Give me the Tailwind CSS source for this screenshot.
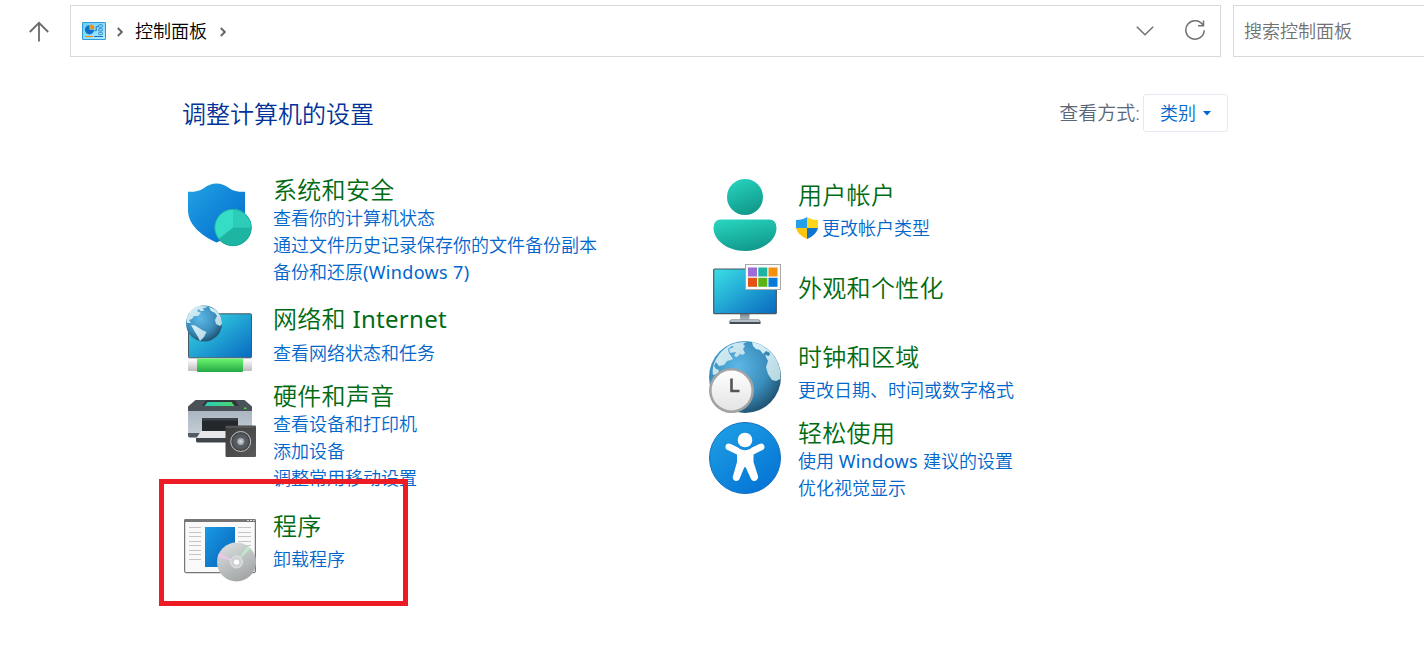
<!DOCTYPE html>
<html lang="zh-CN">
<head>
  <meta charset="UTF-8" />
  <meta name="viewport" content="width=device-width, initial-scale=1.0"/>
  <title>控制面板</title>
  <script src="https://cdn.jsdelivr.net/npm/@tailwindcss/browser@4"></script>
</head>
<body class="bg-white h-[645px] overflow-hidden font-['Noto_Sans','Noto_Sans_CJK_SC',sans-serif] font-[350] text-lg text-[#0066cc]">

  <!-- Address bar -->
  <header class="flex items-center h-[52px] mt-[5px] w-[1440px]">
    <button class="w-[70px] pl-[28px] pt-px">
      <svg class="block" width="22" height="22" viewBox="0 0 22 22" fill="none" stroke="#6b6b6b" stroke-width="1.8"><path d="M11 20.5V2M1.8 11L11 1.8L20.2 11"/></svg>
    </button>
    <div class="flex items-center w-[1151px] h-full border border-[#d9d9d9] pl-[11px] pr-[14px]">
      <svg class="shrink-0 -mt-px" width="24" height="18" viewBox="0 0 24 18">
        <defs><linearGradient id="cp" x1="0" y1="0" x2="1" y2="1"><stop offset="0" stop-color="#67cdf5"/><stop offset="1" stop-color="#b4eaff"/></linearGradient></defs>
        <rect x=".5" y=".5" width="23" height="17" rx=".5" fill="url(#cp)" stroke="#2f9cd9"/>
        <path d="M7.500 3.200A4.600 4.600 0 1 0 12.100 7.800H7.500Z" fill="#0e73c7"/>
        <path d="M8.300 2.600A4.400 4.400 0 0 1 12.500 7H8.300Z" fill="#f58a0b"/>
        <path d="M12.500 8.700h1.800V4.500h2" fill="none" stroke="#1377c4" stroke-width=".9"/>
        <rect x="16.500" y="2.700" width="4" height="2.600" rx="1" fill="none" stroke="#1377c4" stroke-width=".8"/>
        <rect x="16.500" y="6.700" width="4" height="2.300" rx="1" fill="none" stroke="#1377c4" stroke-width=".8"/>
        <rect x="16.500" y="10.400" width="4" height="2.300" rx="1" fill="none" stroke="#1377c4" stroke-width=".8"/>
        <path d="M3 14.500h8" stroke="#f58a0b"/><path d="M12 14.500h9" stroke="#1377c4"/>
      </svg>
      <svg class="ml-[11px] mt-px shrink-0" width="6" height="10" viewBox="0 0 6 10" fill="none" stroke="#666" stroke-width="1.9"><path d="M.8 1L4.8 5L.8 9"/></svg>
      <span class="ml-[12px] text-black">控制面板</span>
      <svg class="ml-[13px] mt-px shrink-0" width="6" height="10" viewBox="0 0 6 10" fill="none" stroke="#666" stroke-width="1.9"><path d="M.8 1L4.8 5L.8 9"/></svg>
      <svg class="ml-auto -mt-px" width="18" height="10" viewBox="0 0 18 10" fill="none" stroke="#707070" stroke-width="1.5"><path d="M.8 .8L9 8.800L17.200 .8"/></svg>
      <svg class="ml-[30px] mb-[3px]" width="22" height="22" viewBox="0 0 22 22" fill="none" stroke="#707070" stroke-width="1.5"><path d="M19.200 6.800A9.200 9.200 0 1 0 20.200 11.200M19.500 1.500V6.800H14"/></svg>
    </div>
    <div class="flex items-center flex-1 h-full ml-3 border border-[#d9d9d9] pl-[10px] text-[#717171]">搜索控制面板</div>
  </header>

  <!-- Title and view mode -->
  <div class="flex items-center h-[38px] mt-[37px] ml-[182px] w-[1046px]">
    <h1 class="pt-px text-2xl text-[#003399]">调整计算机的设置</h1>
    <span class="ml-auto pt-px text-[19px] text-[#5a6778]">查看方式:</span>
    <button class="flex items-center h-full w-[85px] ml-[3px] pl-4 border border-[#e4eaf1] rounded-[3px]">类别
      <svg class="ml-[7px]" width="8" height="5" viewBox="0 0 8 5"><path d="M0 0H8L4 4.500Z" fill="#0066cc"/></svg>
    </button>
  </div>

  <!-- Categories -->
  <main class="flex mt-[44px] ml-[184px] leading-[27px]">
    <section class="w-[525px]">

      <div class="flex items-start gap-[17px] h-[109px]">
        <svg class="mt-[3px] shrink-0" width="72" height="72" viewBox="0 0 72 72">
          <defs>
            <linearGradient id="sh" x1="0" y1="0" x2="1" y2="1"><stop offset="0" stop-color="#22a3e4"/><stop offset="1" stop-color="#0069cc"/></linearGradient>
          </defs>
          <path d="M33 4.500L28 4C24 5 21 7 18.500 9.500C14 12.300 9 13 4 12.800V31C4 45 16 56 32 63.500C49 57 61 47 61 33V12.800C56 13 50 12.500 46 9.500C42 6 38 4.500 33 4.500Z" fill="none"/>
          <path d="M32.500 4.500C37 4.500 41 6 45 9C50 12.500 55 13 61 12.800V33C61 47 49 57 32.500 63.500C16 56 4 45 4 31V12.800C10 13 15 12.500 20 9C24 6 28 4.500 32.500 4.500Z" fill="url(#sh)"/>
          <circle cx="49" cy="48.500" r="18.500" fill="#35ddc6"/>
          <path d="M49 48.500V30A18.500 18.500 0 0 1 67.500 48.500Z" fill="#2cccb8"/>
          <path d="M49 48.500H67.500A18.500 18.500 0 0 1 34.500 60Z" fill="#1fb5a3"/>
          <circle cx="49" cy="48.500" r="18.200" fill="none" stroke="#159c90" stroke-opacity=".65"/>
        </svg>
        <div>
          <h2 class="text-2xl leading-7 tracking-[0.3px] text-[#006b12]">系统和安全</h2>
          <p class="mt-px">查看你的计算机状态</p>
          <p>通过文件历史记录保存你的文件备份副本</p>
          <p>备份和还原<span class="font-normal tracking-[0.35px]">(Windows 7)</span></p>
        </div>
      </div>

      <div class="flex items-start gap-[17px] h-[72px] mt-[18px]">
        <svg class="shrink-0" width="72" height="72" viewBox="0 0 72 72">
          <defs>
            <linearGradient id="scr" x1="0" y1="0" x2="1" y2="1"><stop offset="0" stop-color="#3ae0e6"/><stop offset="1" stop-color="#0868c0"/></linearGradient>
            <linearGradient id="grn" x1="0" y1="0" x2="0" y2="1"><stop offset="0" stop-color="#6cf56f"/><stop offset="1" stop-color="#22a945"/></linearGradient>
            <linearGradient id="plug" x1="0" y1="0" x2="0" y2="1"><stop offset="0" stop-color="#fafafa"/><stop offset="1" stop-color="#bcbcbc"/></linearGradient>
            <radialGradient id="gl" cx=".4" cy=".35" r=".7"><stop offset="0" stop-color="#5cb8e8"/><stop offset=".6" stop-color="#3a8dbb"/><stop offset="1" stop-color="#1d4d6b"/></radialGradient>
            <linearGradient id="land" x1="0" y1="0" x2="1" y2="1"><stop offset="0" stop-color="#d9f4fc"/><stop offset="1" stop-color="#b4d5df"/></linearGradient>
          </defs>
          <rect x="4.500" y="10.800" width="63" height="44" rx="1" fill="url(#scr)" stroke="#4a5660"/>
          <rect x="4" y="57" width="64" height="11" rx="1.500" fill="url(#plug)"/>
          <rect x="13" y="55.500" width="46" height="13.500" rx="1" fill="url(#grn)"/>
          <circle cx="20" cy="20.500" r="18" fill="url(#gl)"/>
          <path d="M2.500 17C4 9 9 4.500 15 3L24 3.500L21 5L19 5L20 8L16 8L15 6L13 8L17 10L14 13L10 13L8 16L5 17L7 20L3 20Z" fill="url(#land)"/>
          <path d="M7 22L11 22.500L15 25L18 27L22.500 29L20 34L16 38L14 34L11 29Z" fill="url(#land)"/>
          <path d="M25 4L30 6C35 9 38 14 38 21L36 23L32 21L31 17L33 13L31 10L27 8Z" fill="url(#land)"/>
        </svg>
        <div class="mt-[3px]">
          <h2 class="text-2xl leading-7 -mt-px tracking-[0.3px] text-[#006b12]">网络和 <span class="font-normal">Internet</span></h2>
          <p class="mt-[7px]">查看网络状态和任务</p>
        </div>
      </div>

      <div class="flex items-start gap-[17px] h-[109px] mt-[7px]">
        <svg class="mt-[10px] shrink-0" width="72" height="72" viewBox="0 0 72 72">
          <defs>
            <linearGradient id="pr" x1="0" y1="0" x2="0" y2="1"><stop offset="0" stop-color="#a9b4bf"/><stop offset="1" stop-color="#c9d2da"/></linearGradient>
            <linearGradient id="scan" x1="0" y1="0" x2="1" y2="0"><stop offset="0" stop-color="#24cbb8"/><stop offset="1" stop-color="#50d86b"/></linearGradient>
            <linearGradient id="spk" x1="0" y1="0" x2="1" y2="1"><stop offset="0" stop-color="#3b3b3b"/><stop offset="1" stop-color="#5a5a5a"/></linearGradient>
            <radialGradient id="cone"><stop offset="0" stop-color="#e0e5ea"/><stop offset="1" stop-color="#8c939a"/></radialGradient>
          </defs>
          <path d="M4 18H68V45Q68 45.500 66 45.500H6Q4 45.500 4 44Z" fill="url(#pr)"/>
          <path d="M4 41H68V43.500Q68 45.500 66 45.500H6Q4 45.500 4 43.500Z" fill="#545b62"/>
          <path d="M11.500 8H60.500L68 14.500V19H4V14.500Z" fill="#4b5158"/>
          <path d="M22 8.200H51L55 14H18Z" fill="#30363b"/>
          <path d="M23.500 10H47.500L50.500 14H20.500Z" fill="url(#scan)"/>
          <rect x="60" y="15.500" width="2.500" height="1.500" fill="#4ce32e"/>
          <path d="M18 26H54V40H18Z" fill="#24282d"/>
          <path d="M18 26H54V28.500H18Z" fill="#3c4249"/>
          <path d="M17 39H54V46H12.500Z" fill="#e8e8ea"/>
          <path d="M12 46H54V50.500H14Q12 50.500 12 49Z" fill="#3f454b"/>
          <rect x="41.500" y="33.500" width="30.500" height="31.500" rx="1" fill="url(#spk)"/>
          <rect x="42" y="34" width="29" height="2" fill="#555"/>
          <circle cx="56.700" cy="49.500" r="10" fill="#4a4a4a" stroke="#b9c3cc" stroke-width="1"/>
          <circle cx="56.700" cy="49.500" r="7.500" fill="#555b61"/>
          <circle cx="56.700" cy="49.500" r="3.700" fill="url(#cone)"/>
        </svg>
        <div>
          <h2 class="text-2xl leading-7 tracking-[0.3px] text-[#006b12]">硬件和声音</h2>
          <p class="mt-px">查看设备和打印机</p>
          <p>添加设备</p>
          <p>调整常用移动设置</p>
        </div>
      </div>

      <div class="relative flex items-start gap-[17px] mt-[21px]">
        <svg class="mt-[2px] shrink-0" width="72" height="72" viewBox="0 0 72 72">
          <defs>
            <linearGradient id="win" x1="0" y1="0" x2="1" y2="1"><stop offset="0" stop-color="#1a9ae2"/><stop offset="1" stop-color="#0562b8"/></linearGradient>
            <linearGradient id="cd" x1="0" y1="0" x2=".5" y2="1"><stop offset="0" stop-color="#e0e2e2"/><stop offset=".5" stop-color="#c3c6c7"/><stop offset="1" stop-color="#a5a8a9"/></linearGradient>
          </defs>
          <rect x=".6" y="5.600" width="70.800" height="53" rx="1.500" fill="#f9f9f9" stroke="#767676" stroke-width="1.200"/>
          <path d="M0 8V6.500Q0 5 1.500 5H70.500Q72 5 72 6.500V8Z" fill="#757575"/>
          <path d="M63 6.500h2M66 6.500h2M69 6.500h1.500" stroke="#ddd"/>
          <path d="M5 13.500h12M5 18.500h12M5 22.500h12M5 27.500h12M5 31.500h12M5 36.500h12M5 40.500h12M5 45.500h12M54 13.500h13M54 18.500h13M54 22.500h13M54 27.500h13M54 31.500h13" stroke="#c4c4c4"/>
          <rect x="21" y="13" width="30" height="40" fill="url(#win)"/>
          <circle cx="52.500" cy="48" r="19.500" fill="url(#cd)"/>
          <path d="M52.500 48L33.700 42.800A19.500 19.500 0 0 1 35.300 39Z" fill="#ebc8ea"/>
          <path d="M52.500 48L63.500 32A19.500 19.500 0 0 1 66.500 34.500Z" fill="#bcebcb"/>
          <circle cx="52.500" cy="48" r="6" fill="#cfd2d2" stroke="#e5e7e7"/>
          <circle cx="52.500" cy="48" r="2.600" fill="#fff"/>
        </svg>
        <div>
          <h2 class="text-2xl leading-7 tracking-[0.3px] text-[#006b12]">程序</h2>
          <p class="mt-1.5">卸载程序</p>
        </div>
        <!-- Highlight frame -->
        <div class="absolute -left-[25px] -top-[33px] w-[249px] h-[127px] border-5 border-[#ed1c24]"></div>
      </div>
    </section>

    <section>
      <div class="flex items-start gap-[17px] h-[72px] mt-[3px]">
        <svg class="shrink-0" width="72" height="72" viewBox="0 0 72 72">
          <defs><linearGradient id="us" x1=".2" y1="0" x2=".6" y2="1"><stop offset="0" stop-color="#27d3bd"/><stop offset="1" stop-color="#10988a"/></linearGradient></defs>
          <circle cx="36" cy="18" r="18" fill="url(#us)"/>
          <path d="M12 40.500H60Q67.500 40.500 67.500 49C67.500 61 54 72 36 72S4.500 61 4.500 49Q4.500 40.500 12 40.500Z" fill="url(#us)"/>
        </svg>
        <div class="mt-[2px]">
          <h2 class="text-2xl leading-7 tracking-[0.3px] text-[#006b12]">用户帐户</h2>
          <p class="flex items-center mt-1.5">
            <svg class="-ml-[2px] mr-[4px] -mt-px" width="22" height="22" viewBox="0 0 22 22">
              <path d="M11 0Q7 3 0 3V11H11Z" fill="#23a0e8"/>
              <path d="M11 0Q15 3 22 3V11H11Z" fill="#ffd61a"/>
              <path d="M0 11Q1.500 18 11 22V11Z" fill="#fdc50e"/>
              <path d="M22 11Q20.500 18 11 22V11Z" fill="#0d75cf"/>
            </svg>更改帐户类型</p>
        </div>
      </div>

      <div class="flex items-start gap-[17px] h-[72px] mt-[7px]">
        <svg class="shrink-0" width="72" height="72" viewBox="0 0 72 72">
          <defs><linearGradient id="stand" x1="0" y1="0" x2="0" y2="1"><stop offset="0" stop-color="#7e8992"/><stop offset="1" stop-color="#b7c0c8"/></linearGradient></defs>
          <rect x="31" y="56" width="9.500" height="7" fill="url(#stand)"/>
          <path d="M22 61.500H50L51.500 63.500V66H20.500V63.500Z" fill="#454d56"/>
          <path d="M22 61.500H50L51 64H21Z" fill="#b4bdc6"/>
          <rect x="4.700" y="11" width="62.600" height="44.700" rx="1" fill="url(#scr)" stroke="#4a5660" stroke-width="1.200"/>
          <rect x="36.500" y="6.500" width="35" height="25" fill="#fbfbfb" stroke="#a8a8a8"/>
          <rect x="39" y="9.500" width="9" height="9" fill="#9c6dd6"/>
          <rect x="49.300" y="9.500" width="9" height="9" fill="#1db4a4"/>
          <rect x="59.500" y="9.500" width="9" height="9" fill="#f5900d"/>
          <rect x="39" y="19.800" width="9" height="9" fill="#e55312"/>
          <rect x="49.300" y="19.800" width="9" height="9" fill="#5bb414"/>
          <rect x="59.500" y="19.800" width="9" height="9" fill="#0679da"/>
        </svg>
        <h2 class="mt-4 text-2xl leading-7 tracking-[0.3px] text-[#006b12]">外观和个性化</h2>
      </div>

      <div class="flex items-start gap-[17px] h-[72px] mt-[11px]">
        <svg class="shrink-0" width="72" height="72" viewBox="0 0 72 72">
          <defs><linearGradient id="face" x1="0" y1="0" x2="0" y2="1"><stop offset="0" stop-color="#fff"/><stop offset="1" stop-color="#e3e3e3"/></linearGradient></defs>
          <circle cx="36" cy="36" r="36" fill="url(#gl)"/>
          <path d="M4 34C2 20 14 5 27 2L38 .5L34 3L36 5L34 8L36 12L34 14L31 13L28 16L25 15L27 11L21 12L20 8L25 6L23 5L19 8L20 12L24 18L22 19L18 20L15 24L10 25L7 21L5 25L7 28L10 29L9 33Z" fill="url(#land)"/>
          <path d="M43 1L50 3C60 7 69 17 71 29L71.500 38L67 40L63 39L59 33L57 26L59 20L56 14L60 15L61 12L57 10L54 13L51 9L47 8L44 5Z" fill="url(#land)"/>
          <circle cx="22.500" cy="49.500" r="21.200" fill="url(#face)" stroke="#a1a3a5" stroke-width="2.600"/>
          <path d="M22.500 37.500V50H30.500" fill="none" stroke="#555" stroke-width="2.600"/>
        </svg>
        <div class="mt-[2px]">
          <h2 class="text-2xl leading-7 tracking-[0.3px] text-[#006b12]">时钟和区域</h2>
          <p class="mt-1.5">更改日期、时间或数字格式</p>
        </div>
      </div>

      <div class="flex items-start gap-[17px] mt-[6px]">
        <svg class="mt-[3px] shrink-0" width="72" height="72" viewBox="0 0 72 72">
          <defs><linearGradient id="ea" x1=".1" y1="0" x2=".8" y2="1"><stop offset="0" stop-color="#1fa0e4"/><stop offset="1" stop-color="#0473d5"/></linearGradient></defs>
          <circle cx="36" cy="36" r="35.500" fill="url(#ea)" stroke="#0f6fbe"/>
          <circle cx="36" cy="18" r="7.300" fill="#fff"/>
          <path d="M19 21.500C21.500 21 25 24 29 25.500C33 29 39 29 43 25.500C47 24 50.500 21 53 21.500C56.500 23 56 27 53.500 28L44.500 32.500V40L49 54C50 58.500 44.500 61 42 57L37 46Q36 44 35 46L30.500 57C28 61 22.500 58.500 24 54L28 40V32.500L18.500 28C15.500 26.500 16 22.500 19 21.500Z" fill="#fff"/>
        </svg>
        <div>
          <h2 class="text-2xl leading-7 tracking-[0.3px] text-[#006b12]">轻松使用</h2>
          <p class="mt-px">使用 <span class="font-normal tracking-[0.35px]">Windows </span>建议的设置</p>
          <p>优化视觉显示</p>
        </div>
      </div>
    </section>
  </main>

</body>
</html>
